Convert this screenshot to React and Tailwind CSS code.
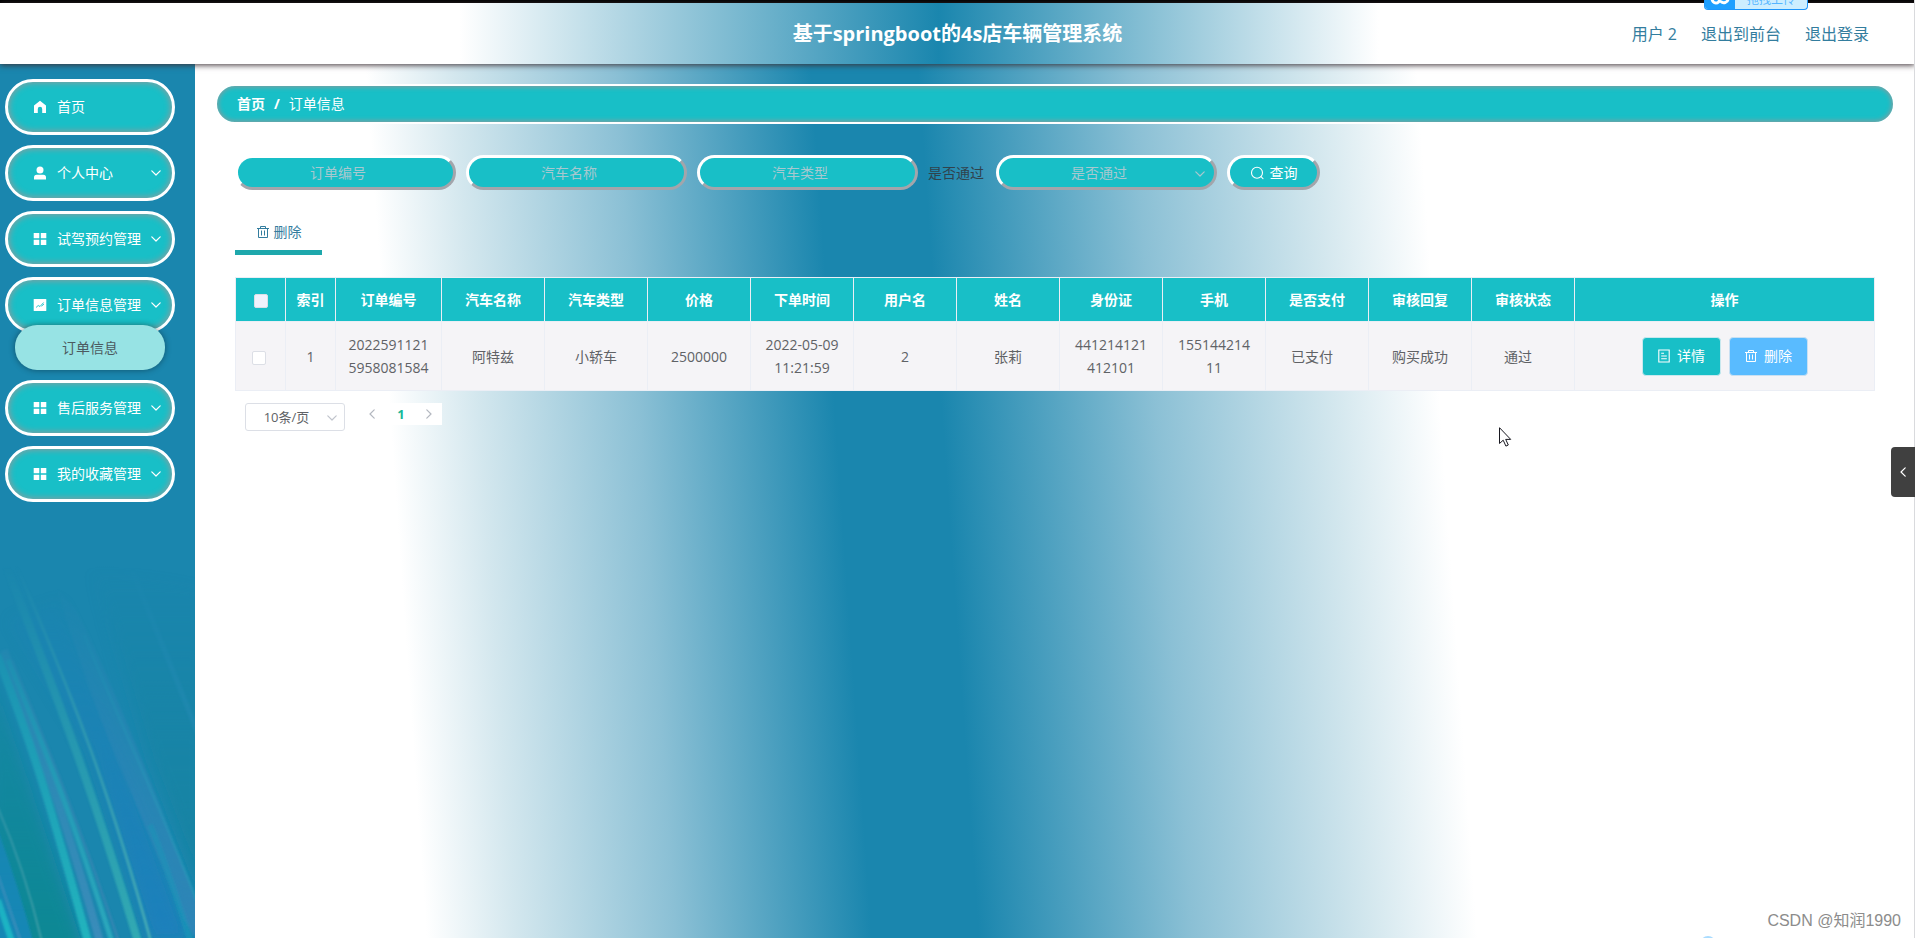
import React from "react";

const HomeIcon = () => (
  <svg viewBox="0 0 14 14" className="h-3.5 w-3.5 shrink-0" fill="currentColor" aria-hidden="true">
    <path d="M7 .8 1 5.4V13h3.8V9a2.2 2.2 0 0 1 4.4 0v4H13V5.4z" />
  </svg>
);

const UserIcon = () => (
  <svg viewBox="0 0 14 14" className="h-3.5 w-3.5 shrink-0" fill="currentColor" aria-hidden="true">
    <circle cx="7" cy="4" r="3.5" />
    <path d="M1 13.5v-2A2.7 2.7 0 0 1 3.700 8.800h6.600A2.700 2.700 0 0 1 13 11.500v2z" />
  </svg>
);

const GridIcon = () => (
  <svg viewBox="0 0 14 14" className="h-3.5 w-3.5 shrink-0" fill="currentColor" aria-hidden="true">
    <path d="M.7 1h5.600v5.200H.7zM7.800 1h5.500v5.200H7.800zM.7 7.800h5.600V13H.7zM7.800 7.800h5.500V13H7.800z" />
  </svg>
);

const ChartIcon = () => (
  <svg viewBox="0 0 14 14" className="h-3.5 w-3.5 shrink-0" aria-hidden="true">
    <rect x=".7" y="1" width="12.600" height="12" rx=".6" fill="currentColor" />
    <path d="m3 9.500 2.200-2 1.800 1 3.600-4M8.500 8.200 11 6" fill="none" stroke="#18bfc7" strokeWidth=".9" />
  </svg>
);

const Chevron = ({ className }) => (
  <svg viewBox="0 0 10 6" className={className} fill="none" stroke="currentColor" strokeWidth="1.200" strokeLinecap="round" strokeLinejoin="round" aria-hidden="true">
    <path d="M.8.800 5 5 9.200.8" />
  </svg>
);

const TrashIcon = () => (
  <svg viewBox="0 0 14 14" className="h-3.5 w-3.5 shrink-0" fill="none" stroke="currentColor" strokeWidth="1" aria-hidden="true">
    <path d="M1 3.500h12M4.500 3.500v-2h5v2M2.500 3.500v9h9v-9M5.500 5.500v5M8.500 5.500v5" />
  </svg>
);

const DocIcon = () => (
  <svg viewBox="0 0 14 14" className="h-3.5 w-3.5 shrink-0" fill="none" stroke="currentColor" strokeWidth="1.100" aria-hidden="true">
    <path d="M1.800 1h10.400v12H1.800zM4.200 4.200H7M4.200 7h5.600M4.200 9.800h5.600" />
  </svg>
);

const SearchIcon = () => (
  <svg viewBox="0 0 14 14" className="h-3.5 w-3.5 shrink-0" fill="none" stroke="currentColor" strokeWidth="1.100" strokeLinecap="round" aria-hidden="true">
    <circle cx="7" cy="6.700" r="5.500" />
    <path d="m11 10.700 2 2" />
  </svg>
);

const Streaks = () => (
  <svg viewBox="0 0 195 438" className="absolute bottom-0 left-0 w-full" aria-hidden="true">
    <defs>
      <linearGradient id="fade" x1="0" y1="0" x2="0" y2="1">
        <stop offset=".15" stopColor="#fff" stopOpacity="0" />
        <stop offset=".5" stopColor="#fff" stopOpacity=".45" />
        <stop offset="1" stopColor="#fff" />
      </linearGradient>
      <mask id="rise" maskUnits="userSpaceOnUse" x="0" y="0" width="195" height="438">
        <rect width="195" height="438" fill="url(#fade)" />
      </mask>
      <filter id="soft"><feGaussianBlur stdDeviation="1.300" /></filter>
      <filter id="wide" x="-50%" y="-20%" width="200%" height="140%"><feGaussianBlur stdDeviation="7" /></filter>
    </defs>
    <g mask="url(#rise)">
      <g filter="url(#wide)">
        <path d="M-10 170 28 280 84 450H-10Z" fill="#0f8894" />
        <path d="M90 60 205 90V400L150 260Z" fill="#1383a0" />
        <path d="M10 120 90 250 150 440H190L110 220 60 100Z" fill="#1a80bc" />
      </g>
      <g fill="none" filter="url(#soft)">
        <path d="M58 90 76 110C100 155 150 275 197 405V440L184 420C150 330 95 225 58 90Z" fill="#3a86bb" opacity=".65" />
        <path d="M84 135C125 235 160 305 197 402" stroke="#2d9dbd" strokeWidth="1.500" />
        <path d="M132 70Q160 140 200 238" stroke="#2b90b8" strokeWidth="5" opacity=".6" />
        <path d="M150 325Q165 360 190 440" stroke="#17a0bb" strokeWidth="6" opacity=".45" />
        <path d="M4 150C38 245 60 300 100 442" stroke="#3f8dbc" strokeWidth="8" opacity=".85" />
        <path d="M-3 155C30 240 45 285 88 442" stroke="#20b3bd" strokeWidth="8" />
        <path d="M8 160C50 260 75 325 112 442" stroke="#2ba8bc" strokeWidth="5" />
        <path d="M12 160C55 265 85 340 119 442" stroke="#3b86b4" strokeWidth="2" />
        <path d="M4 60C50 180 85 265 138 442" stroke="#31a9b2" strokeWidth="8" />
        <path d="M14 60C70 190 108 285 151 442" stroke="#4ab0b5" strokeWidth="2.500" />
        <path d="M-4 325Q20 390 34 445H-8Z" fill="#1587b5" />
        <path d="M-2 308Q25 370 42 442" stroke="#4aa3aa" strokeWidth="1.500" />
        <path d="M-2 400 12 442" stroke="#1fb5c4" strokeWidth="6" />
        <path d="M-2 375 21 442" stroke="#3d8fbc" strokeWidth="2" />
      </g>
    </g>
  </svg>
);

const menu = [
  { label: "首页", icon: HomeIcon },
  { label: "个人中心", icon: UserIcon, arrow: true },
  { label: "试驾预约管理", icon: GridIcon, arrow: true },
  { label: "订单信息管理", icon: ChartIcon, arrow: true, child: "订单信息" },
  { label: "售后服务管理", icon: GridIcon, arrow: true },
  { label: "我的收藏管理", icon: GridIcon, arrow: true },
];

function Sidebar() {
  return (
    <aside className="relative w-[195px] shrink-0 overflow-hidden bg-[#1a86ae]">
      <Streaks />
      <nav className="relative pt-[15px] pr-5 pl-[5px]">
        <ul className="flex flex-col gap-2.5">
          {menu.map(({ label, icon: Icon, arrow, child }) => (
            <li key={label}>
              <button className="flex h-14 w-full items-center rounded-[30px] border-[3px] border-white bg-[#18bfc7] pr-[11px] pl-[25px] text-sm text-white shadow-[inset_0_0_6px_1px_#8f9a9c]">
                <Icon />
                <span className="ml-2.5 flex-1 text-left">{label}</span>
                {arrow && <Chevron className="h-1.5 w-2.5" />}
              </button>
              {child && (
                <a href="#order" className="relative mx-2.5 -mt-2 flex h-[45px] items-center justify-center rounded-[22px] bg-[#97e3e4] text-sm text-[#4c5a60] shadow-[0_0_6px_rgba(0,0,0,0.4)]">
                  {child}
                </a>
              )}
            </li>
          ))}
        </ul>
      </nav>
    </aside>
  );
}

const bevel =
  "h-[35px] rounded-[30px] border-[3px] border-t-white border-l-white border-r-[#a3a5ab] border-b-[#a3a5ab] bg-[#18bfc7]";

const columns = [
  { title: "索引", width: "w-[50px]" },
  { title: "订单编号", width: "w-[106px]" },
  { title: "汽车名称" },
  { title: "汽车类型" },
  { title: "价格" },
  { title: "下单时间" },
  { title: "用户名" },
  { title: "姓名" },
  { title: "身份证" },
  { title: "手机" },
  { title: "是否支付" },
  { title: "审核回复" },
  { title: "审核状态" },
  { title: "操作", width: "w-[300px]" },
];

const cells = [
  "1", "20225911215958081584", "阿特兹", "小轿车", "2500000", "2022-05-09 11:21:59",
  "2", "张莉", "441214121412101", "15514421411", "已支付", "购买成功", "通过",
];

const tagColumns = ["已支付", "通过"];

function OrderTable() {
  return (
    <table className="mt-[22px] w-full table-fixed border-collapse text-center text-sm leading-[23px]">
      <thead className="bg-[#18bfc7] text-white">
        <tr>
          <th className="w-[50px] border border-[#ebeef5] py-2.5">
            <input type="checkbox" aria-label="全选" className="h-3.5 w-3.5 appearance-none rounded-xs border border-[#dcdfe6] bg-[#f0f2fc] align-middle" />
          </th>
          {columns.map((c) => (
            <th key={c.title} className={`border border-[#ebeef5] py-2.5 font-bold ${c.width ?? ""}`}>{c.title}</th>
          ))}
        </tr>
      </thead>
      <tbody className="bg-[#f5f4f7] text-[#606266]">
        <tr>
          <td className="border border-[#ebeef5] py-[11px] pr-1">
            <input type="checkbox" aria-label="选择订单" className="h-3.5 w-3.5 appearance-none rounded-xs border border-[#dcdfe6] bg-white align-middle" />
          </td>
          {cells.map((v, i) => (
            <td key={i} className={`border border-[#ebeef5] py-[11px] break-all ${tagColumns.includes(v) ? "pr-5 pl-2.5" : "px-3"}`}>{v}</td>
          ))}
          <td className="border border-[#ebeef5]">
            <div className="flex justify-center gap-2">
              <button className="flex h-[39px] w-[79px] items-center justify-center gap-1.5 rounded border border-[#c9e8ee] bg-[#18bfc7] text-sm text-white"><DocIcon />详情</button>
              <button className="flex h-[39px] w-[79px] items-center justify-center gap-1.5 rounded border border-[#c9e0f2] bg-[#59bbff] text-sm text-white"><TrashIcon />删除</button>
            </div>
          </td>
        </tr>
      </tbody>
    </table>
  );
}

export default function App() {
  return (
    <div className="relative flex min-h-screen flex-col overflow-hidden bg-white font-['Open_Sans','Noto_Sans_CJK_SC',sans-serif] text-sm">
      <div className="h-[3px] bg-black" />
      <header className="relative z-10 grid h-[61px] grid-cols-[1fr_auto_1fr] items-center bg-[linear-gradient(90deg,#fff_24%,#1a86ae_49%,#fff_72%)] shadow-[0_1px_6px_#3b3035]">
        <h1 className="col-start-2 text-xl font-bold text-white">基于springboot的4s店车辆管理系统</h1>
        <div className="flex justify-end gap-6 pr-[46px] text-base text-[#337d9e]">
          <span>用户 2</span>
          <a href="#front">退出到前台</a>
          <a href="#logout">退出登录</a>
        </div>
      </header>

      <div className="flex flex-1">
        <Sidebar />
        <main className="min-w-0 flex-1 bg-[linear-gradient(86deg,#fff_13%,#d3e7ee_18%,#8bc0d5_27%,#1a86ae_38%,#1a86ae_44%,#8bc0d5_56%,#d3e7ee_66%,#fff_72%)] p-5">
          <nav aria-label="面包屑" className="flex h-10 items-center rounded-[20px] border-2 border-white bg-[#18bfc7] pl-5 text-sm text-white shadow-[inset_0_0_5px_1px_#8f9a9c]">
            <a href="#home" className="font-bold">首页</a>
            <span className="mx-[9px] font-bold">/</span>
            <span>订单信息</span>
          </nav>

          <div className="px-5">
            <form className="mt-[31px] flex items-center gap-2.5" onSubmit={(e) => e.preventDefault()}>
              {["订单编号", "汽车名称", "汽车类型"].map((p) => (
                <input key={p} type="text" placeholder={p} aria-label={p} className={`${bevel} w-[221px] pr-[30px] pl-[15px] text-center text-sm text-white outline-none placeholder:text-[#a8c8cf]`} />
              ))}
              <label htmlFor="passed" className="pr-0.5 text-[#30424c]">是否通过</label>
              <div className="relative text-[#a8c8cf]">
                <select id="passed" className={`${bevel} w-[221px] appearance-none pr-[30px] pl-[15px] text-center text-sm outline-none [text-align-last:center]`}>
                  <option>是否通过</option>
                </select>
                <Chevron className="pointer-events-none absolute top-4 right-3 h-1.5 w-2.5" />
              </div>
              <button className={`${bevel} flex w-[93px] items-center justify-center gap-1.5 text-sm text-white`}><SearchIcon />查询</button>
            </form>

            <button className="mt-6 flex h-[41px] w-[87px] items-center justify-center gap-1 border-b-[5px] border-[#1ea8ac] text-sm text-[#337d9e]"><TrashIcon />删除</button>

            <OrderTable />

            <div className="mt-3 flex items-start pl-2.5 text-[13px] text-[#606266]">
              <div className="relative">
                <select aria-label="每页条数" className="h-7 w-[100px] appearance-none rounded-[3px] border border-[#dcdfe6] bg-white pr-[25px] pl-2 text-center text-[13px] outline-none [text-align-last:center]">
                  <option>10条/页</option>
                </select>
                <Chevron className="pointer-events-none absolute top-3 right-2 h-1.5 w-2.5 text-[#c0c4cc]" />
              </div>
              <div className="ml-3 flex h-[22px] items-center bg-white text-[#b4b8c0]">
                <button aria-label="上一页" className="flex w-[30px] justify-center"><Chevron className="h-1.5 w-2.5 rotate-90" /></button>
                <button className="w-7 font-bold text-[#18b898]">1</button>
                <button aria-label="下一页" className="flex w-[27px] justify-center"><Chevron className="h-1.5 w-2.5 -rotate-90" /></button>
              </div>
            </div>
          </div>
        </main>
      </div>

      <div className="absolute inset-y-0 right-0 z-10 w-px bg-[#d9dadd]" />

      <div className="absolute top-0 right-[107px] z-20 flex h-2.5 w-[104px] items-end overflow-hidden rounded-b border border-t-0 border-[#1e96fb] bg-[#cdeeff]">
        <div className="flex h-full w-[30px] items-end justify-center bg-[#1e9fff]">
          <svg viewBox="0 0 20 7" className="mb-1 h-[7px] w-5" fill="none" stroke="#fff" strokeWidth="3" aria-hidden="true">
            <path d="M2 0c0 7 8 6 7.500 1M10.500 3c2 3 8 2 7.500-3" />
          </svg>
        </div>
        <span className="flex-1 text-center text-xs leading-[18px] text-[#55b5ff]">拖拽上传</span>
      </div>

      <button aria-label="展开面板" className="absolute top-[447px] right-0 z-20 flex h-[50px] w-6 items-center justify-center rounded-l bg-[#404040] text-white">
        <Chevron className="h-1.5 w-2.5 rotate-90" />
      </button>

      <svg viewBox="0 0 13 20" className="absolute top-[427px] left-[1499px] z-20 h-5 w-[13px]" fill="#fff" stroke="#181820" aria-hidden="true">
        <path d="M.5.700v15.800l3.700-3.300 2.700 5.900 2.400-1.100-2.600-5.600h5z" />
      </svg>

      <div className="absolute right-3.5 bottom-[5px] z-20 font-['Liberation_Sans','Noto_Sans_CJK_SC',sans-serif] text-base text-[#8c8c8c]">CSDN @知润1990</div>
      <div className="absolute right-[199px] -bottom-3.5 h-4 w-4 rounded-full bg-[#a9dcff]" />
    </div>
  );
}
